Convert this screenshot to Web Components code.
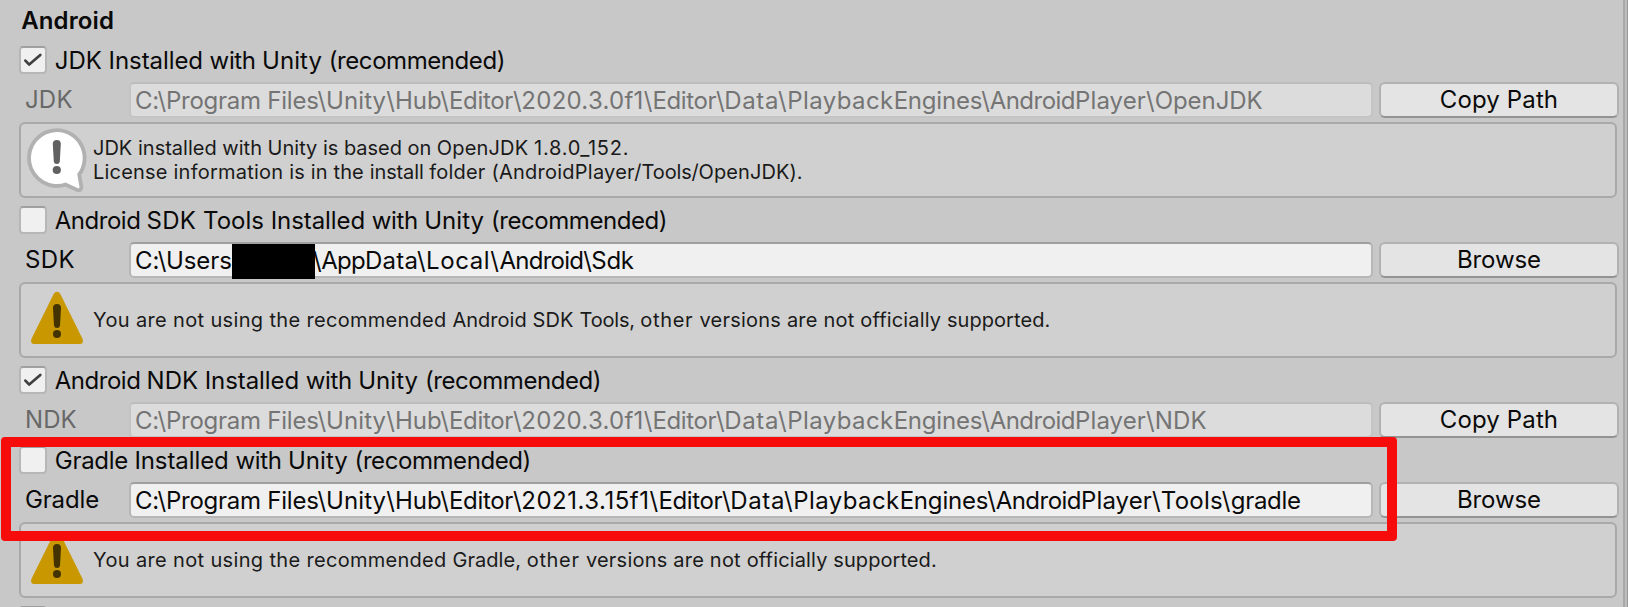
<!DOCTYPE html>
<html lang="en">
<head>
<meta charset="utf-8">
<title>External Tools</title>
<style>
html,body{margin:0;height:607px;overflow:hidden;background:#c8c8c8}
body{font:24px/28px Inter,sans-serif;color:#0a0a0a}
</style>
</head>
<body>
<external-tools></external-tools>
<script>
const define = (name, css, html, setup) => {
  const tpl = document.createElement('template');
  tpl.innerHTML = `<style>${css}</style>${html}`;
  customElements.define(name, class extends HTMLElement {
    connectedCallback() {
      if (this.shadowRoot) return;
      const root = this.attachShadow({ mode: 'open' });
      root.append(tpl.content.cloneNode(true));
      if (setup) setup(this, root);
    }
  });
};

/* Runs of [text, advance]; each run is tracked so that it fills its advance width. */
define('tracked-text', ':host{display:block;white-space:pre;font-kerning:normal}span{font-feature-settings:"calt" 0}', '', (host, root) => {
  for (const [text, width] of JSON.parse(host.getAttribute('runs'))) {
    const s = document.createElement('span');
    s.textContent = text;
    root.append(s);
    if (width) {
      const natural = s.getBoundingClientRect().width;
      s.style.letterSpacing = ((width - natural) / text.length).toFixed(3) + 'px';
    }
  }
});

define('tool-toggle', `
:host{display:flex;height:28px;gap:7.8px;line-height:30px}
.box{box-sizing:border-box;width:28px;height:28px;flex:none;border:2px solid #b7b7b7;border-top-color:#a0a0a0;border-radius:4px;background:#f0f0f0}
svg{display:none;width:24px;height:24px}
:host([checked]) svg{display:block}`,
`<div class="box"><svg viewBox="0 0 24 24"><path d="M4.4 12.6 8.2 16.6 19.3 7" fill="none" stroke="#404040" stroke-width="2.7" stroke-linecap="round" stroke-linejoin="round"/></svg></div><slot></slot>`);

define('path-row', `
:host{display:flex;height:36px}
.label{width:104.1px;padding-left:5.9px;flex:none;line-height:35px}
.field{box-sizing:border-box;width:1244px;height:36px;flex:none;display:flex;border:2px solid #b7b7b7;border-top-color:#a0a0a0;border-radius:5px;background:#f0f0f0;padding-left:4.1px;line-height:33px}
:host([disabled]) .label{color:#686868}
:host([disabled]) .field{color:#747474;background:#dcdcdc;border-color:#c4c4c4;border-top-color:#bdbdbd}
.button{box-sizing:border-box;width:240px;height:36px;flex:none;margin-left:6px;border:2px solid #b2b2b2;border-bottom-color:#939393;border-radius:6px;background:#e4e4e4;display:flex;justify-content:center;line-height:31px}`,
`<div class="label"><slot name="label"></slot></div><div class="field"><slot></slot></div><div class="button"><slot name="button"></slot></div>`);

define('redacted-name', ':host{display:block;width:83px;height:35px;margin:0 -2px 0 .2px;background:#000;position:relative;flex:none}', '');

define('help-box', `
:host{box-sizing:border-box;display:flex;align-items:center;width:1598px;height:76px;border:2px solid #a9a9a9;border-radius:6px;background:#d0d0d0;padding-left:4px;font-size:20px;line-height:24px;color:#1a1a1a}
svg{width:64px;height:64px;flex:none;margin-right:4px;overflow:visible}
.info,:host([info]) .warn{display:none}
:host([info]) .info{display:block}`,
`<svg class="info" viewBox="0 0 64 64">
<path d="M31.8 4A26 26 0 1 0 40.6 54.5L53 60.2Q54.6 60.8 54.5 59L52.2 46A26 26 0 0 0 31.8 4Z" fill="none" stroke="#b1b1b1" stroke-width="7.6" stroke-linejoin="round"/>
<path d="M31.8 4A26 26 0 1 0 40.6 54.5L53 60.2Q54.6 60.8 54.5 59L52.2 46A26 26 0 0 0 31.8 4Z" fill="#fff"/>
<path d="M27.8 15.8Q27.8 12 31.8 12T35.8 15.8L34.8 33.5Q34.5 36 31.8 36T28.8 33.5Z" fill="#616161"/><circle cx="31.8" cy="42" r="4.1" fill="#616161"/></svg>
<svg class="warn" viewBox="0 0 64 64"><path d="M28.8 5.8Q29.9 3.7 32 3.7T35.2 5.8L57.5 50.8Q59.2 56 54.6 56H9.4Q4.8 56 6.5 50.8Z" fill="#c99700"/>
<path d="M28 19.8Q28 16 32 16T36 19.8L35 37.5Q34.7 40 32 40T29 37.5Z" fill="#423300"/><circle cx="32" cy="46" r="4" fill="#423300"/></svg>
<div><slot></slot></div>`);

define('callout-frame', ':host{box-sizing:border-box;position:absolute;left:1px;top:437px;width:1396px;height:104px;border:10px solid #f70c0c;border-radius:4px;z-index:5}', '');
define('pane-edge', ':host{box-sizing:border-box;width:5px;flex:none;height:607px;background:linear-gradient(90deg,#a9a9a9 0 2px,#bdbdbd 2px 4px,#999 4px)}', '');

const t = (runs, slot) => `<tracked-text${slot ? ` slot="${slot}"` : ''} runs='${JSON.stringify(runs)}'></tracked-text>`;
const installed = [['Installed ', 101], ['with ', 52.5], ['Unity ', 66.7], ['(recommended)', 176.2]];
const toggle = (first, checked) => `<tool-toggle ${checked ? 'checked' : ''}>${t([...first, ...installed])}</tool-toggle>`;
const unityPath = (version, width, tail) => t([
  ['C:\\Program ', 132.2], ['Files\\', 58.7], ['Unity\\', 69], ['Hub\\', 54], ['Editor\\', 72.3],
  [version, width], ['Editor\\', 71.6], ['Data\\', 63], ['Playback', 106.4], ['Engines\\', 96],
  ['Android', 85.4], ['Player\\', 79.7], ...tail]);
const row = (label, width, body, button, disabled) => `<path-row ${disabled ? 'disabled' : ''}>${t([[label, width]], 'label')}${body}${t([button], 'button')}</path-row>`;
const copy = ['Copy Path', 118.4], browse = ['Browse', 84];
const warnStart = [['You are not using the ', 213.5], ['recommended ', 145.9]];
const warnEnd = [['other ', 59.2], ['versions are not ', 160.8], ['officially ', 86.6], ['supported.', 103.4]];

define('external-tools', `
:host{display:flex;width:1628px;height:607px;overflow:hidden;position:relative}
main{box-sizing:border-box;width:1623px;flex:none;padding:6px 0 0 19px;display:flex;flex-direction:column;height:607px}
h2{font-size:24px;line-height:30px;height:28px;font-weight:600;margin:0 0 12px;padding-left:2.2px;flex:none}
tool-toggle{margin-bottom:8px;flex:none}
path-row{margin-bottom:4px;flex:none}
help-box{margin-bottom:8px;flex:none}
path-row.tight{margin-bottom:8px}`,
`<main>
<h2>${t([['Android', 92.8]])}</h2>
${toggle([['JDK ', 53.8]], true)}
${row('JDK', 48, unityPath('2020.3.0f1\\', 131.3, [['OpenJDK', 107.8]]), copy, true)}
<help-box info>
${t([['JDK installed with Unity ', 230], ['is based on ', 113.8], ['OpenJDK ', 97.2], ['1.8.0_152.', 95.3]])}
${t([['License ', 80.5], ['information ', 115.7], ['is in the ', 80.5], ['install ', 59.5], ['folder ', 62.2], ['(AndroidPlayer/', 150.2], ['Tools/', 57], ['OpenJDK).', 104]])}
</help-box>
${toggle([['Android ', 91.8], ['SDK ', 56.4], ['Tools ', 67.7]], false)}
${row('SDK', 50, t([['C:\\Users', 96.7]]) + '<redacted-name></redacted-name>' + t([['\\App', 51.9], ['Data\\', 61.1], ['Local\\', 73.4], ['Android\\', 91.9], ['Sdk', 42.5]]), browse, false)}
<help-box>${t([...warnStart, ['Android ', 80], ['SDK ', 47.1], ['Tools, ', 60.8], ...warnEnd])}</help-box>
${toggle([['Android ', 91.8], ['NDK ', 58.1]], true)}
${row('NDK', 52, unityPath('2020.3.0f1\\', 131.3, [['NDK', 52]]), copy, true).replace('<path-row', '<path-row class="tight"')}
${toggle([['Gradle ', 79.6]], false)}
${row('Gradle', 74.1, unityPath('2021.3.15f1\\', 137.3, [['Tools\\', 70], ['gradle', 70]]), browse, false)}
<help-box>${t([...warnStart, ['Gradle, ', 74.3], ...warnEnd])}</help-box>
<tool-toggle></tool-toggle>
</main>
<pane-edge></pane-edge>
<callout-frame></callout-frame>`);
</script>
</body>
</html>
